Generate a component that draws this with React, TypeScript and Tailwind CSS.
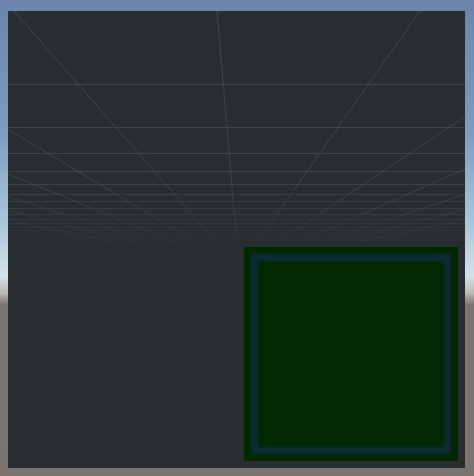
const hLines = [84, 127, 153, 171, 184, 194, 201, 208, 214, 219, 223, 227, 230, 233, 236, 238, 240];
const topXs = [14, 217, 420, -189, -392, -595, -798, -1001, 623, 826, 1029, 1232, 1435];
const vp = { x: 239, y: 268 };

function GridLines() {
  return (
    <svg className="absolute inset-0 h-full w-full" viewBox="0 0 457 457">
      <defs>
        <linearGradient id="fade" gradientUnits="userSpaceOnUse" x1="0" y1="0" x2="0" y2="232">
          <stop offset="0" stopColor="#54585b" stopOpacity="0.6" />
          <stop offset="0.75" stopColor="#54585b" stopOpacity="0.5" />
          <stop offset="0.92" stopColor="#54585b" stopOpacity="0.22" />
          <stop offset="1" stopColor="#54585b" stopOpacity="0.05" />
        </linearGradient>
      </defs>
      {hLines.map((y) => (
        <line key={y} x1="0" x2="457" y1={y - 11 + 0.5} y2={y - 11 + 0.5} stroke="url(#fade)" strokeWidth="1" />
      ))}
      {topXs.map((x) => (
        <line
          key={x}
          x1={x - 8}
          y1="0"
          x2={vp.x - 8 + (x - vp.x) * 0.1}
          y2={vp.y - 11 - 257 * 0.1}
          stroke="url(#fade)"
          strokeWidth="1"
        />
      ))}
    </svg>
  );
}

export default function App() {
  return (
    <div className="flex h-[476px] w-[474px] flex-col bg-[linear-gradient(to_bottom,#6b84ab_0%,#7f9bc0_28%,#a9c6dc_47%,#d2e2e8_58%,#bcbab6_61.5%,#7d7670_64%,#7a736e_100%)] pb-2 pl-2 pr-[9px] pt-[11px]">
      <div className="relative flex h-[457px] w-[457px] items-end justify-end bg-[#2a2d30] pb-[7px] pr-[7px]">
        <GridLines />
        <div className="relative h-[214px] w-[214px] bg-[#012800] p-[7px]">
          <div className="h-full w-full bg-[#0a2b36] p-[7px] blur-[1.5px]">
            <div className="h-full w-full bg-[#012800]" />
          </div>
        </div>
      </div>
    </div>
  );
}
